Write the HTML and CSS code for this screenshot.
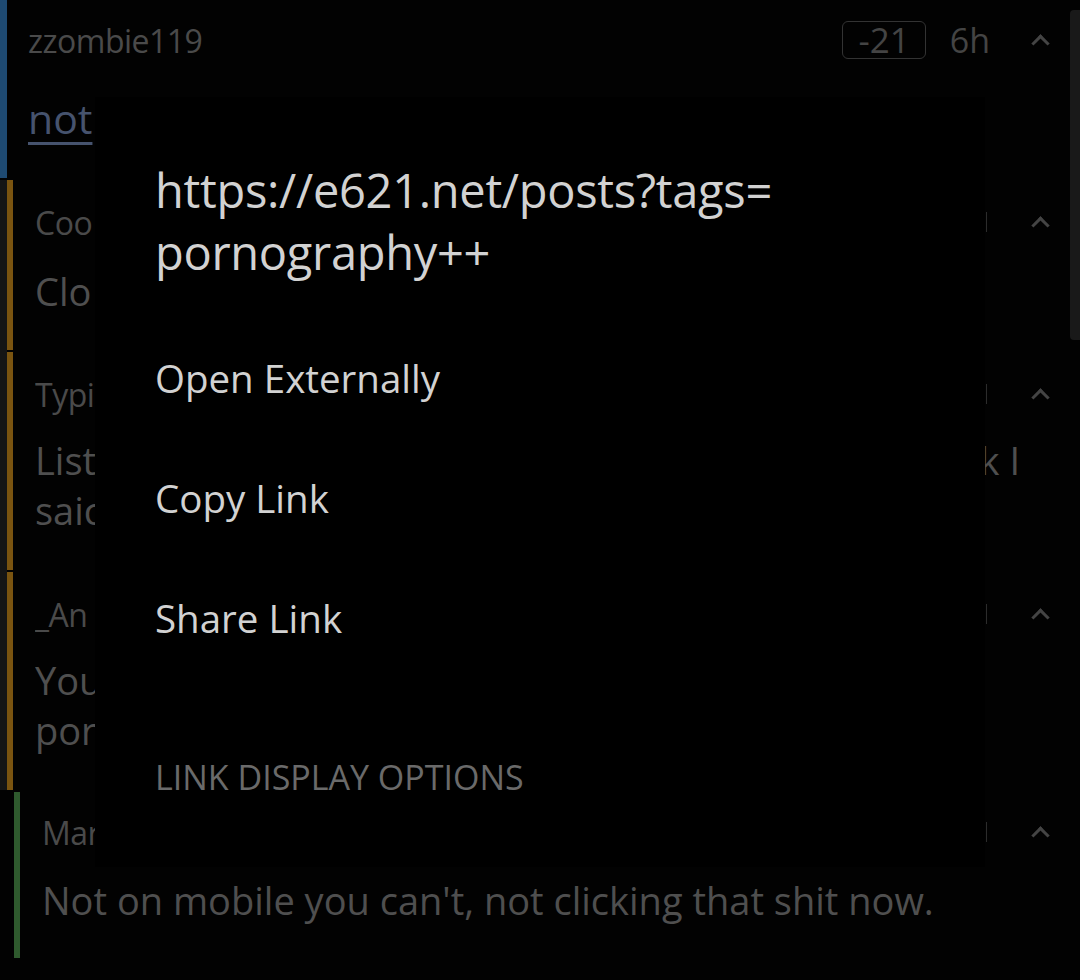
FILE: index.html
```html
<!DOCTYPE html>
<html lang="en">
<head>
    <meta charset="UTF-8">
    <meta name="viewport" content="width=device-width, initial-scale=1.0">
    <title>Comments</title>
    <link rel="stylesheet" href="styles.css">
</head>
<body>
    <div class="screen">
        <div class="comments">
            <div class="comment top">
                <div class="head">
                    <span class="author">zzombie119</span>
                    <div class="meta">
                        <span class="score">-21</span>
                        <span class="age">6h</span>
                        <span class="chevron"></span>
                    </div>
                </div>
                <div class="body"><a class="link cut" href="#">not</a></div>
            </div>

            <div class="rail">
                <div class="comment reply">
                    <div class="head">
                        <span class="author cut">Coo</span>
                        <div class="meta">
                            <span class="tick"></span>
                            <span class="chevron"></span>
                        </div>
                    </div>
                    <div class="body"><span class="cut">Clo</span></div>
                </div>

                <div class="comment reply">
                    <div class="head">
                        <span class="author cut">Typi</span>
                        <div class="meta">
                            <span class="tick"></span>
                            <span class="chevron"></span>
                        </div>
                    </div>
                    <div class="body">
                        <div class="line split">
                            <span class="cut">List</span>
                            <span class="tail">k I</span>
                        </div>
                        <div class="line"><span class="cut">saic</span></div>
                    </div>
                </div>

                <div class="comment reply">
                    <div class="head">
                        <span class="author cut">_An</span>
                        <div class="meta">
                            <span class="tick"></span>
                            <span class="chevron"></span>
                        </div>
                    </div>
                    <div class="body">
                        <div class="line"><span class="cut">You</span></div>
                        <div class="line"><span class="cut">por</span></div>
                    </div>
                </div>
            </div>

            <div class="comment deep">
                <div class="head">
                    <span class="author cut">Mar</span>
                    <div class="meta">
                        <span class="tick"></span>
                        <span class="chevron"></span>
                    </div>
                </div>
                <div class="body">Not on mobile you can't, not clicking that shit now.</div>
            </div>
        </div>

        <div class="scrollbar"></div>

        <!-- link menu over the thread -->
        <div class="dialog">
            <div class="url">https://e621.net/posts?tags=<br>pornography++</div>
            <div class="item">Open Externally</div>
            <div class="item">Copy Link</div>
            <div class="item">Share Link</div>
            <div class="section">LINK DISPLAY OPTIONS</div>
        </div>
    </div>
</body>
</html>
```

FILE: styles.css
```css
body {
    margin: 0;
    background-color: #000;
    font-family: 'Open Sans', 'Liberation Sans', sans-serif;
}
.screen {
    position: relative;
    width: 1080px;
    height: 980px;
    overflow: hidden;
    background-color: #020202;
}
.comments {
    display: flex;
    flex-direction: column;
    gap: 2px;
}
.comment {
    padding-right: 30px;
}
.head {
    display: flex;
    align-items: center;
    justify-content: space-between;
    height: 44px;
}
.author {
    font-size: 32px;
    color: #4a4a4a;
    letter-spacing: -0.5px;
}
.cut {
    display: block;
    overflow: hidden;
    white-space: nowrap;
}
.reply .cut {
    max-width: 60px;
}
.top .cut {
    max-width: 67px;
}
.deep .cut {
    max-width: 53px;
}
.meta {
    display: flex;
    align-items: center;
}
.score {
    font-size: 35px;
    line-height: 36px;
    color: #444;
    border: 1px solid #333;
    border-radius: 6px;
    padding: 0 15px;
    margin-right: 24px;
}
.age {
    font-size: 34px;
    color: #444;
    margin-right: 40px;
}
.tick {
    width: 1px;
    height: 20px;
    background-color: #2c2c2c;
    margin-right: 43px;
}
.chevron {
    width: 20px;
    height: 20px;
    position: relative;
}
.chevron::before {
    content: '';
    position: absolute;
    left: 4px;
    top: 7px;
    width: 10px;
    height: 10px;
    border-left: 3px solid #444;
    border-top: 3px solid #444;
    transform: rotate(45deg);
}
.body {
    font-size: 38px;
    line-height: 50px;
    color: #4f4f4f;
}
.link {
    color: #46536e;
    text-decoration: underline;
    text-decoration-thickness: 3px;
    text-underline-offset: 8px;
    font-size: 41px;
    line-height: 54px;
}

.top {
    border-left: 7px solid #1e4a72;
    padding-left: 21px;
    padding-top: 18px;
    height: 160px;
}
.top .body {
    margin-top: 29px;
}

.rail {
    display: flex;
    flex-direction: column;
    gap: 2px;
    border-left: 7px solid #151515;
}
.reply {
    border-left: 6px solid #7a5410;
    padding-left: 22px;
    padding-top: 20px;
    height: 198px;
}
.reply:first-child {
    height: 150px;
}
.reply:first-child .body {
    margin-top: 22px;
}
.reply .body {
    margin-top: 19px;
}
.line.split {
    display: flex;
    justify-content: space-between;
}
.tail {
    margin-right: 30px;
}

.deep {
    margin-left: 14px;
    border-left: 6px solid #2f5a2e;
    padding-left: 22px;
    padding-top: 18px;
    height: 148px;
}
.deep .body {
    margin-top: 21px;
}

.scrollbar {
    position: absolute;
    right: 0;
    top: 10px;
    width: 10px;
    height: 330px;
    background-color: #191919;
    border-radius: 4px 0 0 4px;
}

.dialog {
    position: absolute;
    left: 95px;
    top: 97px;
    width: 890px;
    height: 770px;
    background-color: #000;
    padding: 62px 60px 0;
    box-sizing: border-box;
    color: #d2d2d2;
}
.url {
    font-size: 47px;
    line-height: 62px;
    margin-bottom: 35px;
    letter-spacing: -0.3px;
}
.item {
    font-size: 38.5px;
    height: 120px;
    display: flex;
    align-items: center;
}
.section {
    margin-top: 69px;
    font-size: 34px;
    line-height: 60px;
    color: #6a6a6a;
}
```
